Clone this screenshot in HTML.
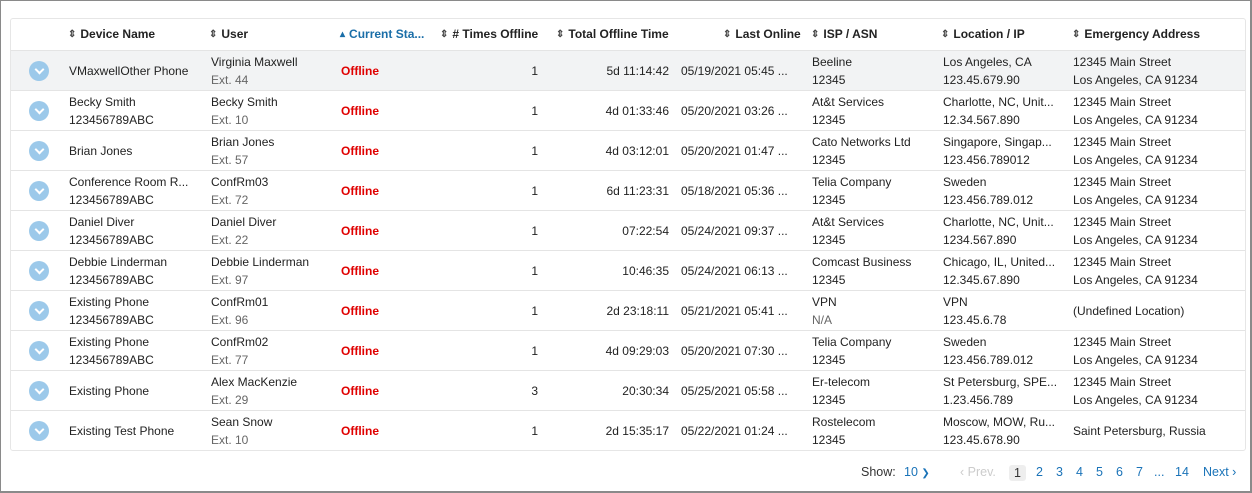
<!DOCTYPE html>
<html><head><meta charset="utf-8"><style>
*{box-sizing:border-box;margin:0;padding:0}
body{width:1252px;height:493px;background:#fff;font-family:"Liberation Sans",Arial,sans-serif;font-size:12px;color:#222;position:relative;overflow:hidden}
.frame{position:absolute;left:0;top:0;width:1252px;height:493px;border:1px solid #8a8a8a;border-right:2px solid #8a8a8a;border-bottom:2px solid #8a8a8a}
.card{position:absolute;left:10px;top:18px;width:1236px;height:433px;border:1px solid #e6e6e6;border-radius:3px}
.hd{position:absolute;top:27px;font-weight:bold;font-size:12px;color:#222;white-space:nowrap}
.hd .s{font-size:10px;color:#444;margin-right:4px;position:relative;top:-1px}
.row{position:absolute;left:11px;width:1234px;height:40px;border-top:1px solid #e4e4e4}
.c{position:absolute;top:0;height:40px;display:flex;flex-direction:column;justify-content:center;line-height:18px;white-space:nowrap;overflow:hidden;text-overflow:ellipsis}
.c span{display:block;overflow:hidden;text-overflow:ellipsis}
.g{color:#666}
.off{color:#e00000;font-weight:bold}
.ex{position:absolute;left:18px;top:10px;width:20px;height:20px;border-radius:50%;background:#9cc9ea}
.ex:after{content:"";position:absolute;left:7px;top:5px;width:5px;height:5px;border-right:2px solid #fff;border-bottom:2px solid #fff;transform:rotate(45deg)}
.pg{position:absolute;top:465px;font-size:12.5px;color:#1a73b8}
</style></head><body>
<div class="frame"></div>
<div class="card"></div>
<div class="hd" style="left:68px"><span class="s">⇕</span>Device Name</div>
<div class="hd" style="left:209px"><span class="s">⇕</span>User</div>
<div class="hd" style="left:340px;color:#1a6ea8"><span class="s" style="color:#1a6ea8">▴</span>Current Sta...</div>
<div class="hd" style="left:440px"><span class="s">⇕</span># Times Offline</div>
<div class="hd" style="left:556px"><span class="s">⇕</span>Total Offline Time</div>
<div class="hd" style="left:723px"><span class="s">⇕</span>Last Online</div>
<div class="hd" style="left:811px"><span class="s">⇕</span>ISP / ASN</div>
<div class="hd" style="left:941px"><span class="s">⇕</span>Location / IP</div>
<div class="hd" style="left:1072px"><span class="s">⇕</span>Emergency Address</div>

<div class="row" style="top:50px;background:#f2f3f4"><div class="ex"></div>
<div class="c" style="left:58px;width:135px">VMaxwellOther Phone</div>
<div class="c" style="left:200px;width:120px"><span>Virginia Maxwell</span><span class="g">Ext. 44</span></div>
<div class="c off" style="left:330px">Offline</div>
<div class="c" style="left:430px;width:97px;align-items:flex-end">1</div>
<div class="c" style="left:570px;width:88px;align-items:flex-end">5d 11:14:42</div>
<div class="c" style="left:670px;width:122px">05/19/2021 05:45 ...</div>
<div class="c" style="left:801px;width:125px"><span>Beeline</span><span>12345</span></div>
<div class="c" style="left:932px;width:125px"><span>Los Angeles, CA</span><span>123.45.679.90</span></div>
<div class="c" style="left:1062px;width:170px"><span>12345 Main Street</span><span>Los Angeles, CA 91234</span></div></div>

<div class="row" style="top:90px"><div class="ex"></div>
<div class="c" style="left:58px;width:135px"><span>Becky Smith</span><span>123456789ABC</span></div>
<div class="c" style="left:200px;width:120px"><span>Becky Smith</span><span class="g">Ext. 10</span></div>
<div class="c off" style="left:330px">Offline</div>
<div class="c" style="left:430px;width:97px;align-items:flex-end">1</div>
<div class="c" style="left:570px;width:88px;align-items:flex-end">4d 01:33:46</div>
<div class="c" style="left:670px;width:122px">05/20/2021 03:26 ...</div>
<div class="c" style="left:801px;width:125px"><span>At&amp;t Services</span><span>12345</span></div>
<div class="c" style="left:932px;width:125px"><span>Charlotte, NC, Unit...</span><span>12.34.567.890</span></div>
<div class="c" style="left:1062px;width:170px"><span>12345 Main Street</span><span>Los Angeles, CA 91234</span></div></div>

<div class="row" style="top:130px"><div class="ex"></div>
<div class="c" style="left:58px;width:135px">Brian Jones</div>
<div class="c" style="left:200px;width:120px"><span>Brian Jones</span><span class="g">Ext. 57</span></div>
<div class="c off" style="left:330px">Offline</div>
<div class="c" style="left:430px;width:97px;align-items:flex-end">1</div>
<div class="c" style="left:570px;width:88px;align-items:flex-end">4d 03:12:01</div>
<div class="c" style="left:670px;width:122px">05/20/2021 01:47 ...</div>
<div class="c" style="left:801px;width:125px"><span>Cato Networks Ltd</span><span>12345</span></div>
<div class="c" style="left:932px;width:125px"><span>Singapore, Singap...</span><span>123.456.789012</span></div>
<div class="c" style="left:1062px;width:170px"><span>12345 Main Street</span><span>Los Angeles, CA 91234</span></div></div>

<div class="row" style="top:170px"><div class="ex"></div>
<div class="c" style="left:58px;width:135px"><span>Conference Room R...</span><span>123456789ABC</span></div>
<div class="c" style="left:200px;width:120px"><span>ConfRm03</span><span class="g">Ext. 72</span></div>
<div class="c off" style="left:330px">Offline</div>
<div class="c" style="left:430px;width:97px;align-items:flex-end">1</div>
<div class="c" style="left:570px;width:88px;align-items:flex-end">6d 11:23:31</div>
<div class="c" style="left:670px;width:122px">05/18/2021 05:36 ...</div>
<div class="c" style="left:801px;width:125px"><span>Telia Company</span><span>12345</span></div>
<div class="c" style="left:932px;width:125px"><span>Sweden</span><span>123.456.789.012</span></div>
<div class="c" style="left:1062px;width:170px"><span>12345 Main Street</span><span>Los Angeles, CA 91234</span></div></div>

<div class="row" style="top:210px"><div class="ex"></div>
<div class="c" style="left:58px;width:135px"><span>Daniel Diver</span><span>123456789ABC</span></div>
<div class="c" style="left:200px;width:120px"><span>Daniel Diver</span><span class="g">Ext. 22</span></div>
<div class="c off" style="left:330px">Offline</div>
<div class="c" style="left:430px;width:97px;align-items:flex-end">1</div>
<div class="c" style="left:570px;width:88px;align-items:flex-end">07:22:54</div>
<div class="c" style="left:670px;width:122px">05/24/2021 09:37 ...</div>
<div class="c" style="left:801px;width:125px"><span>At&amp;t Services</span><span>12345</span></div>
<div class="c" style="left:932px;width:125px"><span>Charlotte, NC, Unit...</span><span>1234.567.890</span></div>
<div class="c" style="left:1062px;width:170px"><span>12345 Main Street</span><span>Los Angeles, CA 91234</span></div></div>

<div class="row" style="top:250px"><div class="ex"></div>
<div class="c" style="left:58px;width:135px"><span>Debbie Linderman</span><span>123456789ABC</span></div>
<div class="c" style="left:200px;width:120px"><span>Debbie Linderman</span><span class="g">Ext. 97</span></div>
<div class="c off" style="left:330px">Offline</div>
<div class="c" style="left:430px;width:97px;align-items:flex-end">1</div>
<div class="c" style="left:570px;width:88px;align-items:flex-end">10:46:35</div>
<div class="c" style="left:670px;width:122px">05/24/2021 06:13 ...</div>
<div class="c" style="left:801px;width:125px"><span>Comcast Business</span><span>12345</span></div>
<div class="c" style="left:932px;width:125px"><span>Chicago, IL, United...</span><span>12.345.67.890</span></div>
<div class="c" style="left:1062px;width:170px"><span>12345 Main Street</span><span>Los Angeles, CA 91234</span></div></div>

<div class="row" style="top:290px"><div class="ex"></div>
<div class="c" style="left:58px;width:135px"><span>Existing Phone</span><span>123456789ABC</span></div>
<div class="c" style="left:200px;width:120px"><span>ConfRm01</span><span class="g">Ext. 96</span></div>
<div class="c off" style="left:330px">Offline</div>
<div class="c" style="left:430px;width:97px;align-items:flex-end">1</div>
<div class="c" style="left:570px;width:88px;align-items:flex-end">2d 23:18:11</div>
<div class="c" style="left:670px;width:122px">05/21/2021 05:41 ...</div>
<div class="c" style="left:801px;width:125px"><span>VPN</span><span class="g">N/A</span></div>
<div class="c" style="left:932px;width:125px"><span>VPN</span><span>123.45.6.78</span></div>
<div class="c" style="left:1062px;width:170px">(Undefined Location)</div></div>

<div class="row" style="top:330px"><div class="ex"></div>
<div class="c" style="left:58px;width:135px"><span>Existing Phone</span><span>123456789ABC</span></div>
<div class="c" style="left:200px;width:120px"><span>ConfRm02</span><span class="g">Ext. 77</span></div>
<div class="c off" style="left:330px">Offline</div>
<div class="c" style="left:430px;width:97px;align-items:flex-end">1</div>
<div class="c" style="left:570px;width:88px;align-items:flex-end">4d 09:29:03</div>
<div class="c" style="left:670px;width:122px">05/20/2021 07:30 ...</div>
<div class="c" style="left:801px;width:125px"><span>Telia Company</span><span>12345</span></div>
<div class="c" style="left:932px;width:125px"><span>Sweden</span><span>123.456.789.012</span></div>
<div class="c" style="left:1062px;width:170px"><span>12345 Main Street</span><span>Los Angeles, CA 91234</span></div></div>

<div class="row" style="top:370px"><div class="ex"></div>
<div class="c" style="left:58px;width:135px">Existing Phone</div>
<div class="c" style="left:200px;width:120px"><span>Alex MacKenzie</span><span class="g">Ext. 29</span></div>
<div class="c off" style="left:330px">Offline</div>
<div class="c" style="left:430px;width:97px;align-items:flex-end">3</div>
<div class="c" style="left:570px;width:88px;align-items:flex-end">20:30:34</div>
<div class="c" style="left:670px;width:122px">05/25/2021 05:58 ...</div>
<div class="c" style="left:801px;width:125px"><span>Er-telecom</span><span>12345</span></div>
<div class="c" style="left:932px;width:125px"><span>St Petersburg, SPE...</span><span>1.23.456.789</span></div>
<div class="c" style="left:1062px;width:170px"><span>12345 Main Street</span><span>Los Angeles, CA 91234</span></div></div>

<div class="row" style="top:410px"><div class="ex"></div>
<div class="c" style="left:58px;width:135px">Existing Test Phone</div>
<div class="c" style="left:200px;width:120px"><span>Sean Snow</span><span class="g">Ext. 10</span></div>
<div class="c off" style="left:330px">Offline</div>
<div class="c" style="left:430px;width:97px;align-items:flex-end">1</div>
<div class="c" style="left:570px;width:88px;align-items:flex-end">2d 15:35:17</div>
<div class="c" style="left:670px;width:122px">05/22/2021 01:24 ...</div>
<div class="c" style="left:801px;width:125px"><span>Rostelecom</span><span>12345</span></div>
<div class="c" style="left:932px;width:125px"><span>Moscow, MOW, Ru...</span><span>123.45.678.90</span></div>
<div class="c" style="left:1062px;width:170px">Saint Petersburg, Russia</div></div>

<div class="pg" style="left:861px;color:#333">Show:</div>
<div class="pg" style="left:904px">10 <span style="font-size:10px">&#10095;</span></div>
<div class="pg" style="left:960px;color:#ccc">‹ Prev.</div>
<div class="pg" style="left:1009px;color:#333;background:#eee;border-radius:3px;padding:0 5px;line-height:16px">1</div>
<div class="pg" style="left:1036px">2</div>
<div class="pg" style="left:1056px">3</div>
<div class="pg" style="left:1076px">4</div>
<div class="pg" style="left:1096px">5</div>
<div class="pg" style="left:1116px">6</div>
<div class="pg" style="left:1136px">7</div>
<div class="pg" style="left:1154px">...</div>
<div class="pg" style="left:1175px">14</div>
<div class="pg" style="left:1203px">Next ›</div>
</body></html>
